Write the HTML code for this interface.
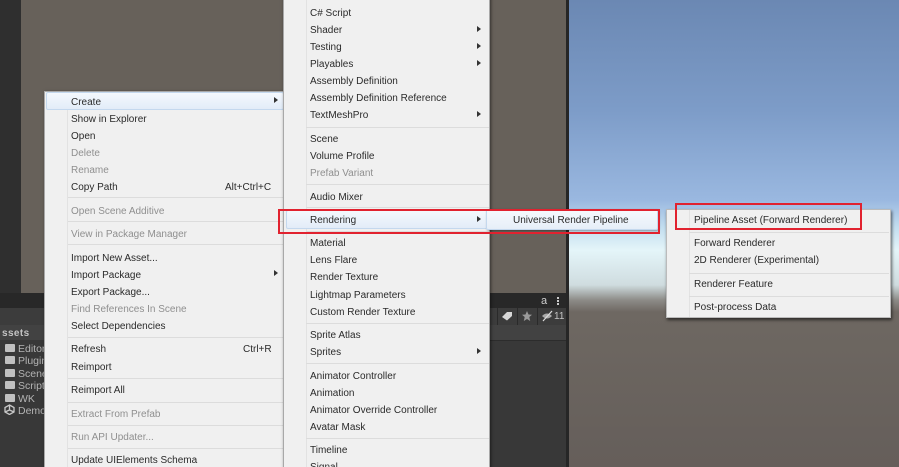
<!DOCTYPE html>
<html><head><meta charset="utf-8"><style>
html,body{margin:0;padding:0;background:#67615a}
#r{position:relative;width:899px;height:467px;overflow:hidden;font:10px/16px "Liberation Sans",sans-serif;color:#2a2a2a;filter:blur(.25px)}
#r div{position:absolute}
.m{background:#f0f0f0;box-shadow:1px 1px 3px rgba(0,0,0,.5);border:1px solid #a8a8a8;box-sizing:border-box}
.t{white-space:nowrap;margin-top:2px}
.g{color:#8f8f8f}
.s{height:1px;background:#dcdcdc}
.v{width:1px;background:#e2e2e2}
.a{width:0;height:0;border-left:4px solid #333;border-top:3.5px solid transparent;border-bottom:3.5px solid transparent}
.h{background:linear-gradient(#f4f8fd,#e2ecf8);border:1px solid #c4d8ee;border-radius:2px;box-sizing:border-box}
.red{border:2px solid #e1222f;box-sizing:border-box}
.d{color:#b4b4b4;white-space:nowrap;font-size:10.5px;margin-top:1px}
.f{width:10px;height:8px;background:#c0c0c0;border-radius:1px}
</style></head><body><div id="r">
<!-- backgrounds -->
<div style="left:0;top:0;width:21px;height:293px;background:#2f2f2f"></div>
<div style="left:21px;top:0;width:545px;height:293px;background:#67615a"></div>
<div style="left:566px;top:0;width:3px;height:467px;background:#262626"></div>
<div style="left:569px;top:0;width:330px;height:467px;background:linear-gradient(#6b88b3 0,#7d9cc8 110px,#9ab8e0 200px,#c4dff0 228px,#e4f5f9 250px,#cfdcdf 285px,#8d8c88 300px,#6e6862 312px,#655e5a 467px)"></div>
<div style="left:0;top:293px;width:566px;height:15px;background:#282828"></div>
<div style="left:0;top:308px;width:566px;height:17px;background:#3c3c3c"></div>
<div style="left:0;top:325px;width:566px;height:15px;background:#424242"></div>
<div style="left:0;top:340px;width:566px;height:127px;background:#383838"></div>
<!-- assets panel -->
<div class="d" style="left:2px;top:325px;font-weight:bold;font-size:10px;letter-spacing:.4px;color:#c4c4c4">ssets</div>
<div class="f" style="left:5px;top:344px"></div><div class="d" style="left:18px;top:340px">Editor</div>
<div class="f" style="left:5px;top:356px"></div><div class="d" style="left:18px;top:352px">Plugin</div>
<div class="f" style="left:5px;top:369px"></div><div class="d" style="left:18px;top:365px">Scene</div>
<div class="f" style="left:5px;top:381px"></div><div class="d" style="left:18px;top:377px">Script</div>
<div class="f" style="left:5px;top:394px"></div><div class="d" style="left:18px;top:390px">WK</div>
<svg style="position:absolute;left:4px;top:404px" width="11" height="11" viewBox="0 0 11 11"><path d="M5.500 1L10 3.500V8L5.500 10.500L1 8V3.500Z M5.500 1V6M5.500 6L1 8M5.500 6L10 8" fill="none" stroke="#c8c8c8" stroke-width="1.300"/></svg>
<div class="d" style="left:18px;top:402px">Demo</div>
<!-- toolbar right -->
<div style="left:497px;top:308px;width:1px;height:17px;background:#2a2a2a"></div>
<div style="left:517px;top:308px;width:1px;height:17px;background:#2a2a2a"></div>
<div style="left:537px;top:308px;width:1px;height:17px;background:#2a2a2a"></div>
<div style="left:490px;top:340px;width:76px;height:1px;background:#2c2c2c"></div>
<div class="d" style="left:541px;top:292px;font-size:11px;color:#cfcfcf">a</div>
<div style="left:557px;top:297px;width:2px;height:2px;background:#ccc"></div>
<div style="left:557px;top:300px;width:2px;height:2px;background:#ccc"></div>
<div style="left:557px;top:303px;width:2px;height:2px;background:#ccc"></div>
<svg style="position:absolute;left:501px;top:311px" width="12" height="10" viewBox="0 0 12 10"><path d="M1 6L6 1H11V5L6 9.500Z" fill="#d8d8d8"/></svg>
<svg style="position:absolute;left:521px;top:310px" width="12" height="12" viewBox="0 0 12 12"><path d="M6 1L7.500 4.500L11 4.800L8.300 7L9.200 11L6 9L2.800 11L3.700 7L1 4.800L4.500 4.500Z" fill="#9a9a9a"/></svg>
<svg style="position:absolute;left:541px;top:310px" width="13" height="12" viewBox="0 0 13 12"><path d="M1 6Q6 1 11 6Q6 11 1 6Z" fill="#aaa"/><path d="M2 11L11 1" stroke="#ddd" stroke-width="1.200"/></svg>
<div class="d" style="left:554px;top:308px;font-size:10px;color:#c4c4c4">11</div>

<!-- menu 1 -->
<div class="m" style="left:44px;top:91px;width:240px;height:390px"></div>
<div class="v" style="left:67px;top:110px;height:357px"></div>
<div class="h" style="left:46px;top:92px;width:238px;height:18px"></div>
<div class="t" style="left:71px;top:93px">Create</div><div class="a" style="left:274px;top:97px"></div>
<div class="t" style="left:71px;top:110px">Show in Explorer</div>
<div class="t" style="left:71px;top:127px">Open</div>
<div class="t g" style="left:71px;top:144px">Delete</div>
<div class="t g" style="left:71px;top:161px">Rename</div>
<div class="t" style="left:71px;top:178px">Copy Path</div><div class="t" style="left:225px;top:178px">Alt+Ctrl+C</div>
<div class="s" style="left:68px;top:197px;width:215px"></div>
<div class="t g" style="left:71px;top:202px">Open Scene Additive</div>
<div class="s" style="left:68px;top:221px;width:215px"></div>
<div class="t g" style="left:71px;top:225px">View in Package Manager</div>
<div class="s" style="left:68px;top:244px;width:215px"></div>
<div class="t" style="left:71px;top:249px">Import New Asset...</div>
<div class="t" style="left:71px;top:266px">Import Package</div><div class="a" style="left:274px;top:270px"></div>
<div class="t" style="left:71px;top:283px">Export Package...</div>
<div class="t g" style="left:71px;top:300px">Find References In Scene</div>
<div class="t" style="left:71px;top:317px">Select Dependencies</div>
<div class="s" style="left:68px;top:337px;width:215px"></div>
<div class="t" style="left:71px;top:340px">Refresh</div><div class="t" style="left:243px;top:340px">Ctrl+R</div>
<div class="t" style="left:71px;top:358px">Reimport</div>
<div class="s" style="left:68px;top:378px;width:215px"></div>
<div class="t" style="left:71px;top:381px">Reimport All</div>
<div class="s" style="left:68px;top:402px;width:215px"></div>
<div class="t g" style="left:71px;top:405px">Extract From Prefab</div>
<div class="s" style="left:68px;top:425px;width:215px"></div>
<div class="t g" style="left:71px;top:428px">Run API Updater...</div>
<div class="s" style="left:68px;top:448px;width:215px"></div>
<div class="t" style="left:71px;top:451px">Update UIElements Schema</div>

<!-- menu 2 -->
<div class="m" style="left:283px;top:-5px;width:207px;height:490px"></div>
<div class="v" style="left:306px;top:0;height:467px"></div>
<div class="t" style="left:310px;top:4px">C# Script</div>
<div class="t" style="left:310px;top:21px">Shader</div><div class="a" style="left:477px;top:26px"></div>
<div class="t" style="left:310px;top:38px">Testing</div><div class="a" style="left:477px;top:43px"></div>
<div class="t" style="left:310px;top:55px">Playables</div><div class="a" style="left:477px;top:60px"></div>
<div class="t" style="left:310px;top:72px">Assembly Definition</div>
<div class="t" style="left:310px;top:89px">Assembly Definition Reference</div>
<div class="t" style="left:310px;top:106px">TextMeshPro</div><div class="a" style="left:477px;top:111px"></div>
<div class="s" style="left:306px;top:127px;width:183px"></div>
<div class="t" style="left:310px;top:130px">Scene</div>
<div class="t" style="left:310px;top:147px">Volume Profile</div>
<div class="t g" style="left:310px;top:164px">Prefab Variant</div>
<div class="s" style="left:306px;top:184px;width:183px"></div>
<div class="t" style="left:310px;top:188px">Audio Mixer</div>
<div class="s" style="left:306px;top:207px;width:183px"></div>
<div class="h" style="left:286px;top:210px;width:203px;height:19px"></div>
<div class="t" style="left:310px;top:211px">Rendering</div><div class="a" style="left:477px;top:216px"></div>
<div class="s" style="left:306px;top:231px;width:183px"></div>
<div class="t" style="left:310px;top:234px">Material</div>
<div class="t" style="left:310px;top:251px">Lens Flare</div>
<div class="t" style="left:310px;top:268px">Render Texture</div>
<div class="t" style="left:310px;top:286px">Lightmap Parameters</div>
<div class="t" style="left:310px;top:303px">Custom Render Texture</div>
<div class="s" style="left:306px;top:323px;width:183px"></div>
<div class="t" style="left:310px;top:326px">Sprite Atlas</div>
<div class="t" style="left:310px;top:343px">Sprites</div><div class="a" style="left:477px;top:348px"></div>
<div class="s" style="left:306px;top:363px;width:183px"></div>
<div class="t" style="left:310px;top:367px">Animator Controller</div>
<div class="t" style="left:310px;top:384px">Animation</div>
<div class="t" style="left:310px;top:401px">Animator Override Controller</div>
<div class="t" style="left:310px;top:418px">Avatar Mask</div>
<div class="s" style="left:306px;top:438px;width:183px"></div>
<div class="t" style="left:310px;top:441px">Timeline</div>
<div class="t" style="left:310px;top:458px">Signal</div>

<!-- submenu universal -->
<div class="h" style="left:486px;top:209px;width:172px;height:21px;background:linear-gradient(#f6f9fd,#e6eef8);box-shadow:1px 1px 2px rgba(0,0,0,.35)"></div>
<div class="t" style="left:513px;top:211px">Universal Render Pipeline</div>

<!-- menu 3 -->
<div class="m" style="left:666px;top:209px;width:225px;height:109px;border-color:#bbb;box-shadow:1px 2px 3px rgba(0,0,0,.6)"></div>
<div class="v" style="left:689px;top:210px;height:107px"></div>
<div class="t" style="left:694px;top:211px">Pipeline Asset (Forward Renderer)</div>
<div class="s" style="left:689px;top:232px;width:200px"></div>
<div class="t" style="left:694px;top:234px">Forward Renderer</div>
<div class="t" style="left:694px;top:251px">2D Renderer (Experimental)</div>
<div class="s" style="left:689px;top:273px;width:200px"></div>
<div class="t" style="left:694px;top:275px">Renderer Feature</div>
<div class="s" style="left:689px;top:296px;width:200px"></div>
<div class="t" style="left:694px;top:298px">Post-process Data</div>

<!-- red boxes -->
<div class="red" style="left:278px;top:209px;width:382px;height:25px"></div>
<div class="red" style="left:675px;top:203px;width:187px;height:27px"></div>
</div></body></html>
